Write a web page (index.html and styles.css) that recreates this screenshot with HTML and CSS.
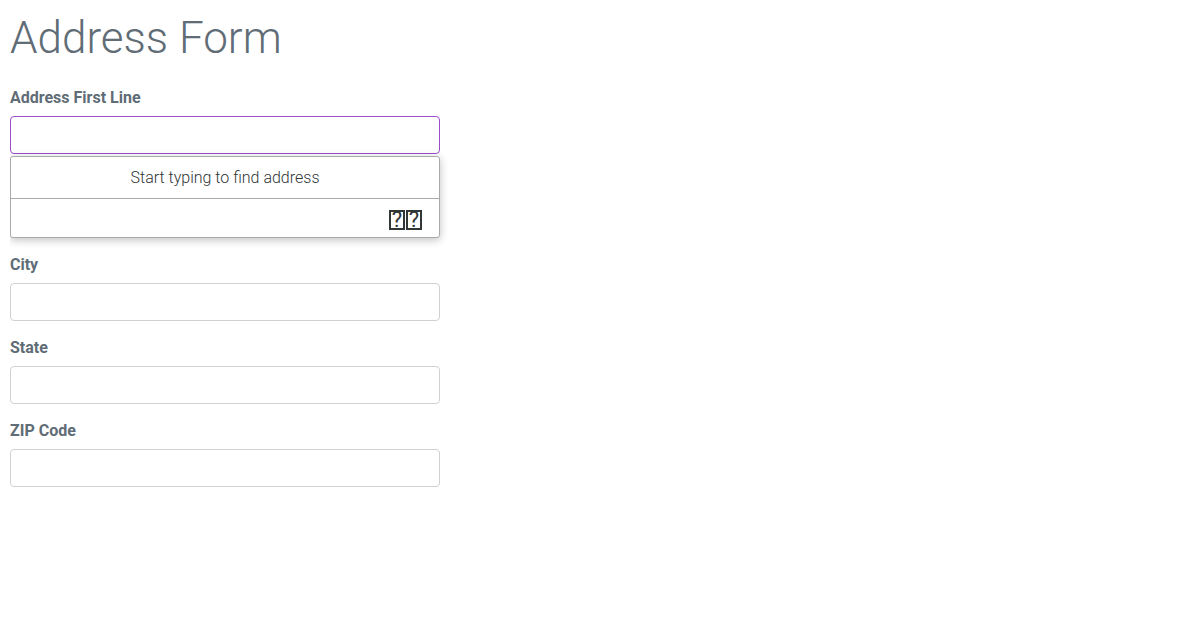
FILE: index.html
```html
<!DOCTYPE html>
<html lang="en">
<head>
    <meta charset="UTF-8">
    <meta name="viewport" content="width=device-width, initial-scale=1.0">
    <title>Address Form</title>
    <link rel="stylesheet" href="styles.css">
</head>
<body>
    <h1>Address Form</h1>
    <form class="address-form" autocomplete="off">
        <div class="field">
            <label for="line1">Address First Line</label>
            <input type="text" id="line1" class="active">
            <div class="suggestions">
                <div class="message">Start typing to find address</div>
                <div class="country">
                    <span class="glyph">?</span>
                    <span class="glyph">?</span>
                </div>
            </div>
        </div>
        <div class="field">
            <label for="city">City</label>
            <input type="text" id="city">
        </div>
        <div class="field">
            <label for="state">State</label>
            <input type="text" id="state">
        </div>
        <div class="field">
            <label for="zip">ZIP Code</label>
            <input type="text" id="zip">
        </div>
    </form>
</body>
</html>
```
FILE: styles.css
```css
* {
    box-sizing: border-box;
}

body {
    margin: 10px;
    font-family: Roboto, "Liberation Sans", sans-serif;
    font-size: 16px;
    font-weight: 300;
    line-height: 24px;
    color: #606c76;
    background-color: #fff;
}

h1 {
    margin: 0 0 20px;
    font-size: 44px;
    font-weight: 300;
    line-height: 56px;
}

.address-form {
    max-width: 430px;
}

.field {
    margin-bottom: 15px;
}

label {
    display: block;
    margin-bottom: 6px;
    font-weight: 700;
}

input {
    display: block;
    width: 100%;
    height: 38px;
    padding: 6px 10px;
    font: inherit;
    color: inherit;
    background-color: transparent;
    border: 1px solid #d1d1d1;
    border-radius: 4px;
}

input:focus,
input.active {
    border-color: #9b4dca;
    outline: 0;
}

/* Suggestion list under the first line */
.suggestions {
    margin-top: 2px;
    color: #313637;
    background-color: #fff;
    border: 1px solid #aaa;
    border-radius: 3px;
    box-shadow: 0 2px 8px rgba(0, 0, 0, 0.25);
}

.message {
    padding: 9px 16px 8px;
    text-align: center;
    border-bottom: 1px solid #aaa;
}

.country {
    display: flex;
    justify-content: flex-end;
    gap: 1px;
    padding: 11px 17px 7px;
}

.glyph {
    width: 16px;
    height: 20px;
    border: 2px solid #313637;
    font-size: 22px;
    font-weight: 400;
    line-height: 16px;
    text-align: center;
}
```
